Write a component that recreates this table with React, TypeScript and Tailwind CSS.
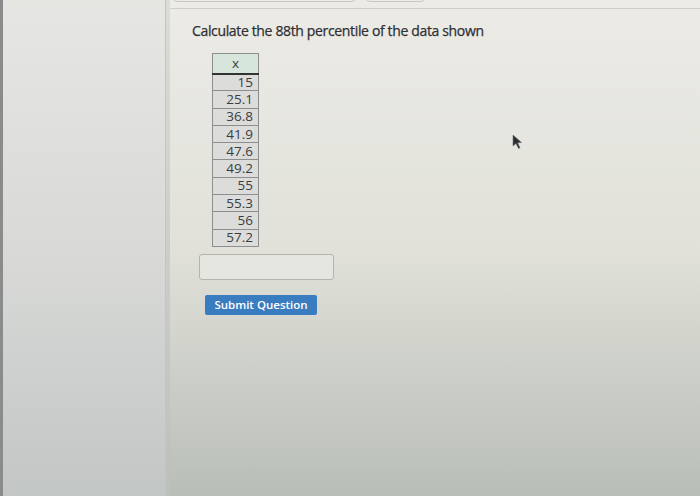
import React from 'react';

const values = ['15', '25.1', '36.8', '41.9', '47.6', '49.2', '55', '55.3', '56', '57.2'];

function Cursor() {
  return (
    <svg width="12" height="16" viewBox="0 0 12 16" className="absolute left-[342px] top-[134px]">
      <path d="M1 1 L1 12 L4 9.5 L6.5 14.5 L8 13.8 L5.6 8.8 L9.5 8.5 Z" fill="#2a2d33" stroke="#6b6e72" strokeWidth="0.6" />
    </svg>
  );
}

export default function App() {
  return (
    <div
      className="flex h-[496px] w-[700px] overflow-hidden bg-[#d8d9d4]"
      style={{ fontFamily: '"Open Sans", "DejaVu Sans", sans-serif' }}
    >
      {/* left pane */}
      <div className="w-[165px] shrink-0 border-l-[3px] border-l-[#8a8c8c] bg-linear-to-b from-[#e6e6e3] via-[#d9dad8] to-[#c2c6c5]" />
      <div className="w-[5px] shrink-0 border-l border-[#c4c5c1] bg-linear-to-b from-[#dcdcd8] to-[#bcc0bd]" />

      {/* main pane */}
      <div className="relative flex flex-1 flex-col bg-linear-to-b from-[#ecebe6] via-[#e1e1da] to-[#b8beb6]">
        <div className="flex h-[9px] shrink-0 items-end gap-[10px] border-b border-[#cfcdc7] pl-[3px]">
          <div className="h-[12px] w-[183px] -translate-y-[6px] rounded-b-[4px] border border-[#c9c7c1]" />
          <div className="h-[12px] w-[59px] -translate-y-[6px] rounded-b-[4px] border border-[#c9c7c1]" />
        </div>

        <div className="flex flex-col pl-[22px] pt-[12px]">
          <h1 className="text-[14px] leading-5 tracking-[-0.35px] text-[#2e3034] [-webkit-text-stroke:0.25px_#2e3034]">
            Calculate the 88th percentile of the data shown
          </h1>

          <table className="ml-[20px] mt-[12px] w-[47px] border-collapse text-[13.5px] text-[#3a3c40]">
            <thead>
              <tr>
                <th className="h-[20px] border border-b-[2px] border-[#8d8f8f] border-b-[#333] bg-[#d7e6da] p-0 text-center font-normal leading-[16px]">
                  x
                </th>
              </tr>
            </thead>
            <tbody>
              {values.map((v) => (
                <tr key={v}>
                  <td className="h-[17.3px] border border-[#8d8f8f] bg-[#dcdddb] py-0 pr-[5px] text-right leading-[15px]">
                    {v}
                  </td>
                </tr>
              ))}
            </tbody>
          </table>

          <div className="ml-[7px] mt-[7px] h-[26px] w-[135px] rounded-[3px] border border-[#b4b4ae] bg-[#e6e6e1]" />

          <button className="ml-[13px] mt-[15px] h-[20px] w-[112px] rounded-[2px] bg-[#3a7cc0] text-[11.5px] font-semibold leading-none text-white">
            Submit Question
          </button>
        </div>

        <Cursor />
      </div>
    </div>
  );
}
